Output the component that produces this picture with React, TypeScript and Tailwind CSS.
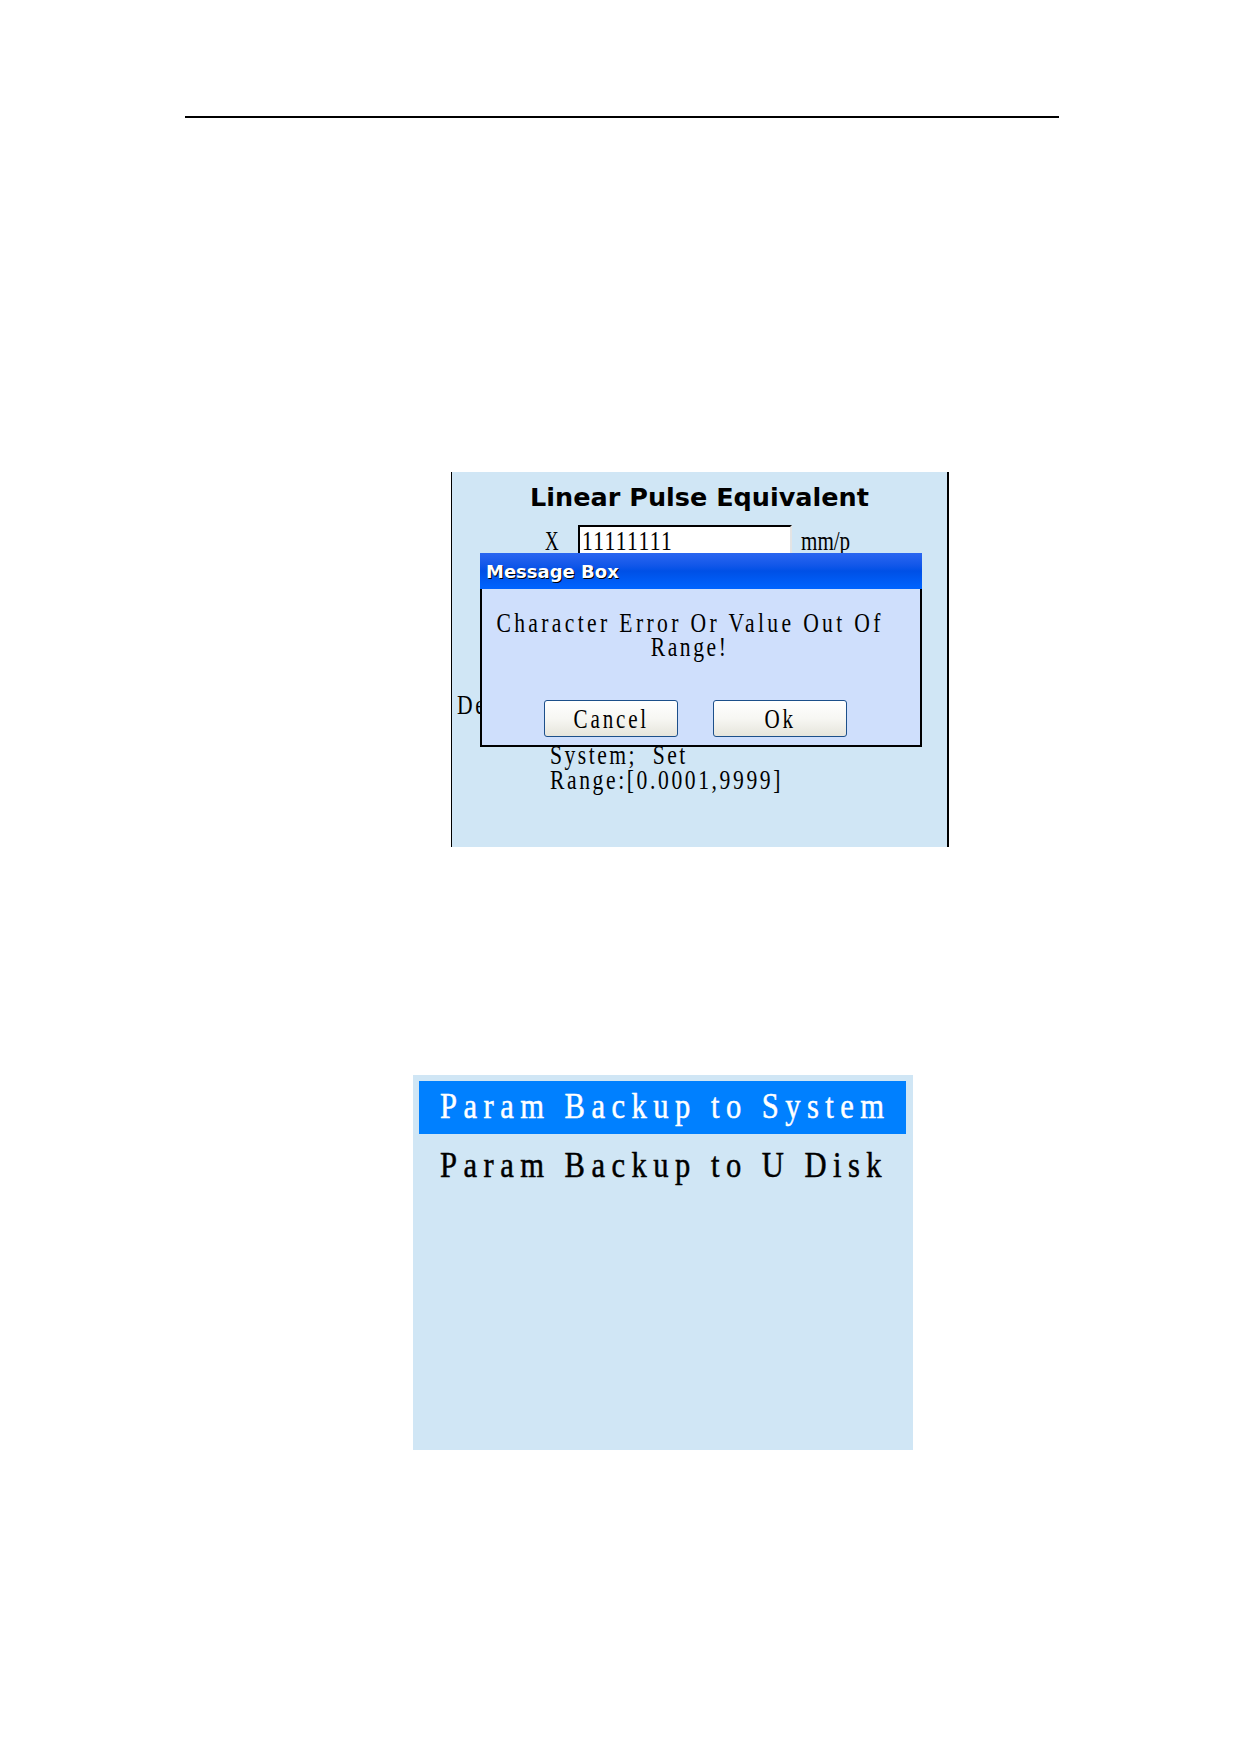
import React from "react";

const serif = "font-['Liberation_Serif',serif]";
const sans = "font-['DejaVu_Sans',sans-serif]";

// the device renders a narrow bitmap serif; squeeze Times-metric glyphs to match
function Narrow({ children, className }: { children: React.ReactNode; className: string }) {
  return <span className={`inline-block whitespace-pre ${className}`}>{children}</span>;
}

function XpButton({ label }: { label: string }) {
  return (
    <button className="w-[134px] h-[37px] flex items-center justify-center rounded-[3px] border border-[#1c4f8a] bg-linear-to-b from-white via-[#f7f7f3] to-[#e6e5dc] text-black">
      <span className={`${serif} text-[27px] leading-[24px]`}>
        <Narrow className="tracking-[3.6px] scale-x-[0.78]">{label}</Narrow>
      </span>
    </button>
  );
}

function MessageBox() {
  return (
    <div className="absolute left-[28px] top-[81px] w-[442px] flex flex-col">
      <div className="h-[36px] flex items-center pl-[6px] bg-linear-to-b from-[#2a66f0] via-[#0050e6] to-[#0064ff]">
        <span className={`${sans} font-bold text-[18px] text-white [text-shadow:1px_1px_0_#000]`}>
          Message Box
        </span>
      </div>
      <div className="bg-[#cfdffc] border-2 border-t-0 border-black h-[158px] flex flex-col">
        <div className={`${serif} text-[27px] leading-[24px] text-black pl-[8px] pr-[30px] pt-[22px] flex flex-col items-center`}>
          <Narrow className="tracking-[4.2px] scale-x-[0.8]">Character Error Or Value Out Of</Narrow>
          <Narrow className="tracking-[3.2px] scale-x-[0.8]">Range!</Narrow>
        </div>
        <div className="flex pl-[62px] gap-[35px] mt-[41px]">
          <XpButton label="Cancel" />
          <XpButton label="Ok" />
        </div>
      </div>
    </div>
  );
}

function PulsePanel() {
  return (
    <div className="relative ml-[451px] mt-[354px] w-[498px] h-[375px] bg-[#d0e6f5] border-l border-r-2 border-black">
      <div className={`${sans} font-bold text-[25.5px] leading-[30px] text-center text-black pt-[10px]`}>
        Linear Pulse Equivalent
      </div>
      <div className={`${serif} text-[27px] leading-[24px] text-black flex items-start pl-[93px] mt-[13px]`}>
        <span className="mt-[4px] w-[12px]">
          <Narrow className="scale-x-[0.7] origin-left">X</Narrow>
        </span>
        <div className="ml-[21px] w-[214px] h-[30px] bg-white border-2 border-t-black border-l-black border-r-[#e4e4e4] border-b-[#e4e4e4] pl-[2px] pt-[2px] overflow-hidden">
          <Narrow className="tracking-[1.6px] scale-x-[0.8] origin-left">11111111</Narrow>
        </div>
        <span className="ml-[9px] mt-[4px]">
          <Narrow className="scale-x-[0.78] origin-left">mm/p</Narrow>
        </span>
      </div>
      <div className={`${serif} text-[27px] leading-[25px] text-black flex mt-[138px] pl-[5px]`}>
        <span className="w-[93px]">
          <Narrow className="tracking-[3.2px] scale-x-[0.8] origin-left">Desc:</Narrow>
        </span>
        <div className="pt-[50px] flex flex-col items-start">
          <Narrow className="tracking-[3.1px] scale-x-[0.8] origin-left">System;  Set</Narrow>
          <Narrow className="tracking-[3.25px] scale-x-[0.8] origin-left">Range:[0.0001,9999]</Narrow>
        </div>
      </div>
      <MessageBox />
    </div>
  );
}

function BackupPanel() {
  const items = [
    { label: "Param Backup to System", active: true },
    { label: "Param Backup to U Disk", active: false },
  ];
  return (
    <div className="ml-[413px] mt-[228px] w-[500px] h-[375px] bg-[#d0e6f5] pt-[6px] pl-[6px] pr-[7px]">
      <div className="flex flex-col gap-[6px]">
        {items.map((it) => (
          <div
            key={it.label}
            className={`h-[53px] pl-[21px] ${serif} text-[36px] leading-[50px] overflow-hidden [-webkit-text-stroke:0.5px_currentColor] ${
              it.active ? "bg-[#0080ff] text-white" : "text-black"
            }`}
          >
            <Narrow className="tracking-[7.6px] scale-x-[0.85] origin-left">{it.label}</Narrow>
          </div>
        ))}
      </div>
    </div>
  );
}

export default function App() {
  return (
    <div className="w-[1240px] h-[1754px] bg-white overflow-hidden">
      <div className="ml-[185px] mt-[116px] w-[874px] h-[2px] bg-black" />
      <PulsePanel />
      <BackupPanel />
    </div>
  );
}
